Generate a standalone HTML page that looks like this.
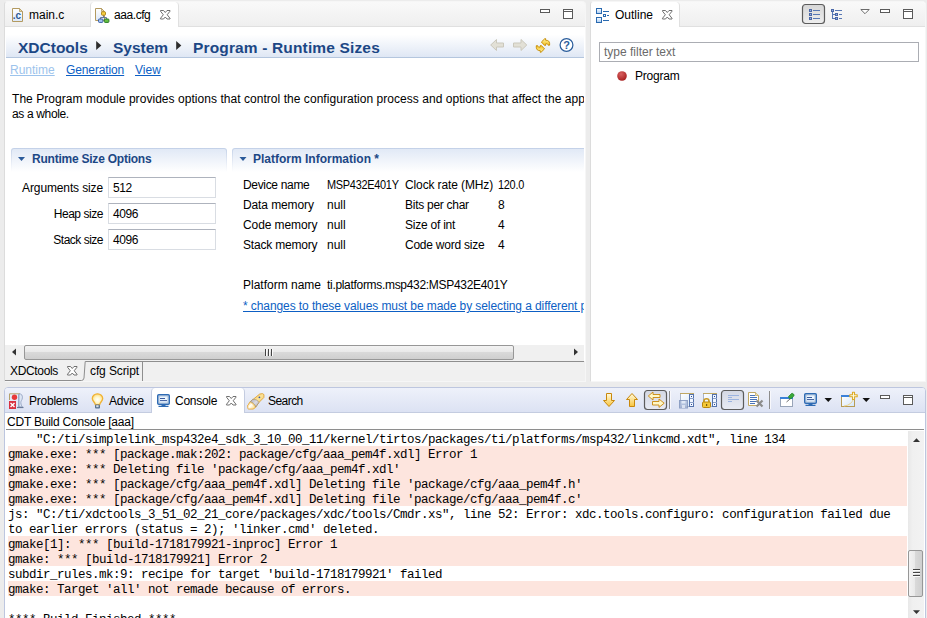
<!DOCTYPE html>
<html>
<head>
<meta charset="utf-8">
<title>aaa.cfg</title>
<style>
html,body{margin:0;padding:0;}
body{width:927px;height:618px;overflow:hidden;background:#ececec;position:relative;
 font-family:"Liberation Sans",sans-serif;font-size:12px;color:#000;}
.abs{position:absolute;}
.panel{position:absolute;background:#fff;border:1px solid #f6f6f6;border-left-color:#dcdcdc;box-sizing:border-box;}
.t{position:absolute;white-space:nowrap;line-height:14px;}
.l{color:#0d5fc4;text-decoration:underline;}
.hd{font-size:15.5px;font-weight:bold;color:#1c4785;line-height:18px;top:38.500px;}
.sec{font-weight:bold;color:#1c4785;}
.tf{position:absolute;box-sizing:border-box;border:1px solid #d9dde3;border-top-color:#aeb3bd;background:#fff;height:21px;width:108px;left:108px;}
.mono{font-family:"Liberation Mono",monospace;font-size:12.5px;letter-spacing:-0.5px;}
.cl{position:absolute;left:8px;width:899px;height:15px;line-height:19px;white-space:pre;}
.err{background:#fde5de;}
svg{position:absolute;overflow:visible;}
</style>
</head>
<body>

<!-- ================= EDITOR PANEL ================= -->
<div class="panel" style="left:4px;top:1px;width:582px;height:381px;border-radius:4px 4px 0 0;background:#f0f0f0;"></div>
<div class="abs" style="left:5px;top:2px;width:580px;height:24px;background:linear-gradient(#f9f9f9,#efefef);border-bottom:1px solid #e0e0e0;border-radius:3px 3px 0 0;"></div>
<div class="abs" style="left:5px;top:27px;width:580px;height:334px;background:#fff;"></div>
<div class="abs" id="edclip" style="left:0;top:0;width:584px;height:381px;overflow:hidden;">
  <!-- tab bar -->
  <div class="abs" style="left:90px;top:2px;width:87px;height:25px;background:#fff;border-left:1px solid #e0e0e0;border-right:1px solid #e0e0e0;border-radius:4px 4px 0 0;"></div>
  <div class="t" style="left:29px;top:8px;">main.c</div>
  <div class="t" style="left:114px;top:8px;letter-spacing:-0.43px;">aaa.cfg</div>
  <!-- white content -->
  <!-- header -->
  <div class="abs" style="left:6px;top:27px;width:578px;height:30px;background:linear-gradient(#ffffff 25%,#dfe7f4);border-bottom:1px solid #b4c6de;"></div>
  <div class="t hd" style="left:18px;">XDCtools</div>
  <div class="t hd" style="left:113px;">System</div>
  <div class="t hd" style="left:193px;letter-spacing:0.15px;">Program - Runtime Sizes</div>
  <!-- links -->
  <div class="t" style="left:10px;top:63px;color:#9cc3ec;text-decoration:underline;">Runtime</div>
  <div class="t l" style="left:66px;top:63px;letter-spacing:-0.12px;">Generation</div>
  <div class="t l" style="left:135px;top:63px;">View</div>
  <!-- description -->
  <div class="t" style="left:12px;top:92px;letter-spacing:0.045px;">The Program module provides options that control the configuration process and options that affect the application</div>
  <div class="t" style="left:12px;top:107px;letter-spacing:-0.35px;">as a whole.</div>

  <!-- section: Runtime Size Options -->
  <div class="abs" style="left:11px;top:148px;width:216px;height:24px;border-radius:3px 3px 0 0;background:linear-gradient(#c3d1e8,#ffffff);"></div>
  <div class="abs" style="left:12px;top:149px;width:214px;height:23px;border-radius:2px 2px 0 0;background:linear-gradient(#e1e9f6,#ffffff);"></div>
  <div class="t sec" style="left:32px;top:152px;letter-spacing:-0.23px;">Runtime Size Options</div>
  <div class="t" style="right:481px;top:181px;letter-spacing:-0.13px;">Arguments size</div>
  <div class="t" style="right:481px;top:207px;letter-spacing:-0.45px;">Heap size</div>
  <div class="t" style="right:481px;top:233px;letter-spacing:-0.5px;">Stack size</div>
  <div class="tf" style="top:177px;"></div>
  <div class="tf" style="top:203px;"></div>
  <div class="tf" style="top:229px;"></div>
  <div class="t" style="left:113px;top:181px;letter-spacing:-0.4px;">512</div>
  <div class="t" style="left:113px;top:207px;letter-spacing:-0.4px;">4096</div>
  <div class="t" style="left:113px;top:233px;letter-spacing:-0.4px;">4096</div>

  <!-- section: Platform Information -->
  <div class="abs" style="left:232px;top:148px;width:360px;height:24px;border-radius:3px 3px 0 0;background:linear-gradient(#c3d1e8,#ffffff);"></div>
  <div class="abs" style="left:233px;top:149px;width:358px;height:23px;border-radius:2px 2px 0 0;background:linear-gradient(#e1e9f6,#ffffff);"></div>
  <div class="t sec" style="left:253px;top:152px;">Platform Information *</div>
  <div class="t" style="left:243px;top:178px;letter-spacing:-0.33px;">Device name</div>
  <div class="t" style="left:243px;top:198px;letter-spacing:-0.11px;">Data memory</div>
  <div class="t" style="left:243px;top:218px;letter-spacing:-0.09px;">Code memory</div>
  <div class="t" style="left:243px;top:238px;letter-spacing:-0.2px;">Stack memory</div>
  <div class="t" style="left:327px;top:178px;letter-spacing:-0.3px;transform:scaleX(0.91);transform-origin:0 0;">MSP432E401Y</div>
  <div class="t" style="left:327px;top:198px;">null</div>
  <div class="t" style="left:327px;top:218px;">null</div>
  <div class="t" style="left:327px;top:238px;">null</div>
  <div class="t" style="left:405px;top:178px;letter-spacing:-0.12px;">Clock rate (MHz)</div>
  <div class="t" style="left:405px;top:198px;letter-spacing:-0.27px;">Bits per char</div>
  <div class="t" style="left:405px;top:218px;letter-spacing:-0.23px;">Size of int</div>
  <div class="t" style="left:405px;top:238px;letter-spacing:-0.24px;">Code word size</div>
  <div class="t" style="left:498px;top:178px;letter-spacing:-0.3px;transform:scaleX(0.91);transform-origin:0 0;">120.0</div>
  <div class="t" style="left:498px;top:198px;">8</div>
  <div class="t" style="left:498px;top:218px;">4</div>
  <div class="t" style="left:498px;top:238px;">4</div>
  <div class="t" style="left:243px;top:278px;">Platform name</div>
  <div class="t" style="left:327px;top:278px;letter-spacing:-0.31px;">ti.platforms.msp432:MSP432E401Y</div>
  <div class="t l" style="left:243px;top:299px;letter-spacing:-0.09px;">* changes to these values must be made by selecting a different platform</div>

  <!-- h scrollbar -->
  <div class="abs" style="left:5px;top:345px;width:579px;height:16px;background:#f0f0f0;"></div>
  <div class="abs" style="left:24px;top:345px;width:490px;height:15px;box-sizing:border-box;border:1px solid #979797;border-radius:2px;background:linear-gradient(#f3f3f3,#e9e9e9 45%,#d9d9d9 50%,#cfcfcf);"></div>

  <!-- bottom tabs -->
  <svg style="left:0;top:0;" width="584" height="382" viewBox="0 0 584 382"><path d="M5 380.500H81.500Q83.600 380.500 84 378L85.200 361.500H584M142.500 361.500V381" fill="none" stroke="#8e8e8e" stroke-width="1"/></svg>
  <div class="t" style="left:10px;top:364px;letter-spacing:-0.34px;">XDCtools</div>
  <div class="t" style="left:90px;top:364px;letter-spacing:-0.11px;">cfg Script</div>
</div>

<!-- ================= OUTLINE PANEL ================= -->
<div class="panel" style="left:590px;top:1px;width:336px;height:381px;border-radius:4px 4px 0 0;"></div>
<div class="abs" style="left:591px;top:2px;width:334px;height:24px;background:linear-gradient(#f9f9f9,#efefef);border-bottom:1px solid #e0e0e0;border-radius:3px 3px 0 0;"></div>
<div class="abs" style="left:591px;top:2px;width:88px;height:25px;background:#fff;border-right:1px solid #e0e0e0;border-radius:4px 4px 0 0;"></div>
<div class="t" style="left:615px;top:8px;">Outline</div>
<div class="abs" style="left:599px;top:42px;width:320px;height:20px;border:1px solid #abadb3;box-sizing:border-box;background:#fff;"></div>
<div class="t" style="left:604px;top:45px;color:#6a6a6a;">type filter text</div>
<div class="t" style="left:635px;top:69px;letter-spacing:-0.2px;">Program</div>

<!-- ================= CONSOLE PANEL ================= -->
<div class="panel" style="left:4px;top:387px;width:922px;height:240px;border-radius:4px 4px 0 0;border-color:#bdc6df;"></div>
<div class="abs" style="left:5px;top:388px;width:920px;height:24px;background:linear-gradient(#eef1fa,#dce2f3);border-bottom:1px solid #c4cce0;border-radius:3px 3px 0 0;"></div>
<div class="abs" style="left:151px;top:388px;width:92px;height:25px;background:#fff;border-left:1px solid #c4cce0;border-right:1px solid #c4cce0;border-radius:4px 4px 0 0;"></div>
<div class="t" style="left:29px;top:394px;letter-spacing:-0.24px;">Problems</div>
<div class="t" style="left:109px;top:394px;letter-spacing:-0.18px;">Advice</div>
<div class="t" style="left:175px;top:394px;letter-spacing:-0.27px;">Console</div>
<div class="t" style="left:268px;top:394px;letter-spacing:-0.55px;">Search</div>
<div class="t" style="left:7px;top:415px;letter-spacing:-0.22px;">CDT Build Console [aaa]</div>
<div class="abs" style="left:6px;top:429px;width:918px;height:1px;background:#8e8e8e;"></div>

<!-- console text -->
<div id="con" class="mono">
<div class="abs err" style="left:8px;top:446px;width:899px;height:60px;"></div>
<div class="abs err" style="left:8px;top:536px;width:899px;height:30px;"></div>
<div class="abs err" style="left:8px;top:581px;width:899px;height:15px;"></div>
<div class="cl" style="top:431px;">    "C:/ti/simplelink_msp432e4_sdk_3_10_00_11/kernel/tirtos/packages/ti/platforms/msp432/linkcmd.xdt", line 134</div>
<div class="cl" style="top:446px;">gmake.exe: *** [package.mak:202: package/cfg/aaa_pem4f.xdl] Error 1</div>
<div class="cl" style="top:461px;">gmake.exe: *** Deleting file 'package/cfg/aaa_pem4f.xdl'</div>
<div class="cl" style="top:476px;">gmake.exe: *** [package/cfg/aaa_pem4f.xdl] Deleting file 'package/cfg/aaa_pem4f.h'</div>
<div class="cl" style="top:491px;">gmake.exe: *** [package/cfg/aaa_pem4f.xdl] Deleting file 'package/cfg/aaa_pem4f.c'</div>
<div class="cl" style="top:506px;">js: "C:/ti/xdctools_3_51_02_21_core/packages/xdc/tools/Cmdr.xs", line 52: Error: xdc.tools.configuro: configuration failed due</div>
<div class="cl" style="top:521px;">to earlier errors (status = 2); 'linker.cmd' deleted.</div>
<div class="cl" style="top:536px;">gmake[1]: *** [build-1718179921-inproc] Error 1</div>
<div class="cl" style="top:551px;">gmake: *** [build-1718179921] Error 2</div>
<div class="cl" style="top:566px;">subdir_rules.mk:9: recipe for target 'build-1718179921' failed</div>
<div class="cl" style="top:581px;">gmake: Target 'all' not remade because of errors.</div>
<div class="cl" style="top:611px;">**** Build Finished ****</div>
</div>

<!-- v scrollbar -->
<div class="abs" style="left:908px;top:431px;width:16px;height:190px;background:linear-gradient(90deg,#e8e8e8,#f0f0f0 30%,#f2f2f2);"></div>
<div class="abs" style="left:908px;top:550px;width:15px;height:47px;box-sizing:border-box;border:1px solid #979797;border-radius:2px;background:linear-gradient(90deg,#f3f3f3,#e9e9e9 45%,#d9d9d9 50%,#cfcfcf);"></div>


<!-- ================= ICONS ================= -->
<!-- c file icon -->
<svg style="left:12px;top:8px;" width="12" height="14" viewBox="0 0 12 14">
  <defs><linearGradient id="gdoc" x1="0" y1="0" x2="0" y2="1"><stop offset="0" stop-color="#ffffff"/><stop offset="1" stop-color="#dce8f8"/></linearGradient></defs>
  <path d="M0.5 0.5H7.5L10.5 3.5V13.5H0.5Z" fill="url(#gdoc)" stroke="#b39a60"/>
  <path d="M7.5 0.5V3.5H10.5Z" fill="#e8d8a8" stroke="#b39a60" stroke-width="0.8"/>
  <text x="0.800" y="11" font-family="Liberation Sans, sans-serif" font-weight="bold" font-size="10" fill="#2c5a96">.c</text>
</svg>
<!-- cfg icon -->
<svg style="left:95px;top:8px;" width="15" height="15" viewBox="0 0 15 15">
  <path d="M0.5 0.5H6.5L9.5 3.5V12.5H0.5Z" fill="url(#gdoc)" stroke="#b39a60"/>
  <path d="M6.5 0.5V3.5H9.5Z" fill="#e8d8a8" stroke="#b39a60" stroke-width="0.8"/>
  <path d="M8.5 7V9.5M5.5 11.5V9.5H11.5V11.5" fill="none" stroke="#6a7a9a"/>
  <rect x="6.5" y="3.8" width="4" height="3.4" rx="0.8" fill="#f8d040" stroke="#b08820"/>
  <rect x="3.5" y="11" width="4.4" height="3.4" rx="0.8" fill="#a8c4f0" stroke="#3a60a8"/>
  <rect x="9.3" y="11" width="4.6" height="3.4" rx="0.8" fill="#68c040" stroke="#2a7a28"/>
</svg>
<!-- close X aaa.cfg -->
<svg style="left:160px;top:10px;" width="11" height="10" viewBox="0 0 11 10">
  <path id="xshape" d="M0.500 0.500H3.500L5.250 2.500L7 0.500H10V1.200L7.200 4.750L10 8.300V9H7L5.250 7L3.500 9H0.500V8.300L3.300 4.750L0.500 1.200Z" fill="#fff" stroke="#606060" stroke-width="0.9"/>
</svg>
<svg style="left:662px;top:10px;" width="11" height="10" viewBox="0 0 11 10"><use href="#xshape"/></svg>
<svg style="left:226px;top:396px;" width="11" height="10" viewBox="0 0 11 10"><use href="#xshape"/></svg>
<svg style="left:67px;top:366px;" width="11" height="10" viewBox="0 0 11 10"><use href="#xshape"/></svg>

<!-- min/max editor -->
<svg style="left:540px;top:9px;" width="34" height="10" viewBox="0 0 34 10" shape-rendering="crispEdges">
  <rect x="0.5" y="0.5" width="9" height="3" fill="#fff" stroke="#5a5a5a"/>
  <rect x="23.5" y="0.5" width="9" height="9" fill="#fff" stroke="#5a5a5a"/>
  <path d="M23.5 2.5H32.5" stroke="#5a5a5a"/>
</svg>
<!-- header triangles -->
<svg style="left:97px;top:41px;" width="90" height="10" viewBox="0 0 90 10">
  <path d="M-0.800 0L4.300 4.500L-0.800 9Z" fill="#2c2c2c"/>
  <path d="M79.200 0L84.300 4.500L79.200 9Z" fill="#2c2c2c"/>
</svg>
<!-- header toolbar -->
<svg style="left:490px;top:38px;" width="86" height="16" viewBox="0 0 86 16">
  <path d="M0.700 7L6.500 1.500V5H13.500V9H6.500V12.500Z" fill="#e2e0d6" stroke="#cbc8bc" stroke-width="1" stroke-linejoin="round"/>
  <path d="M36.800 7L31 1.500V5H23.500V9H31V12.500Z" fill="#e2e0d6" stroke="#cbc8bc" stroke-width="1" stroke-linejoin="round"/>
  <defs><linearGradient id="gref" x1="0" y1="0" x2="0" y2="1"><stop offset="0" stop-color="#fff2a0"/><stop offset="1" stop-color="#f4c020"/></linearGradient></defs>
  <g fill="url(#gref)" stroke="#c8900c" stroke-width="1" stroke-linejoin="round">
    <path id="ra" d="M51.400 4L54.900 0.600H55.600V2.200C58.400 2.200 59.600 3.600 59.600 5.500V7.200H58.200C58.200 6.200 57.300 5.700 55.800 5.700L55.500 7.400H54.600Z"/>
    <use href="#ra" transform="rotate(180 52.950 7.450)"/>
  </g>
  <circle cx="76.5" cy="7" r="6.4" fill="#fff" stroke="#2a5d9c" stroke-width="1.2"/>
  <text x="76.5" y="11" text-anchor="middle" font-family="Liberation Sans, sans-serif" font-weight="bold" font-size="11" fill="#2a5d9c">?</text>
</svg>

<!-- section twisties -->
<svg style="left:18px;top:157px;" width="230" height="5" viewBox="0 0 230 5">
  <path d="M0 0H7L3.5 4Z" fill="#2a5a9a"/>
  <path d="M221.500 0H228.500L225 4Z" fill="#2a5a9a"/>
</svg>

<!-- h scrollbar arrows + grip -->
<svg style="left:5px;top:345px;" width="579" height="15" viewBox="0 0 579 15">
  <path d="M11 3.5V10.500L7 7Z" fill="#333"/>
  <path d="M569 3.500V10.500L573 7Z" fill="#333"/>
  <g shape-rendering="crispEdges"><path d="M261.500 4V11M264.500 4V11M267.500 4V11" stroke="#fbfbfb"/><path d="M260.500 4V11M263.500 4V11M266.500 4V11" stroke="#444"/></g>
</svg>

<!-- outline icon -->
<svg style="left:596px;top:8px;" width="14" height="15" viewBox="0 0 14 15" shape-rendering="crispEdges">
  <defs><linearGradient id="gsq" x1="0" y1="0" x2="0" y2="1"><stop offset="0" stop-color="#ffffff"/><stop offset="1" stop-color="#a8ccf4"/></linearGradient></defs>
  <rect x="0.5" y="0.5" width="5" height="5" fill="url(#gsq)" stroke="#2a6ab0"/>
  <rect x="0.5" y="9.500" width="5" height="5" fill="url(#gsq)" stroke="#2a6ab0"/>
  <rect x="7.500" y="6.500" width="2" height="2" fill="#fff" stroke="#2a6ab0"/>
  <path d="M7 3.500H13M7 12.500H13M11 7.500H13" stroke="#2a6ab0"/>
</svg>
<!-- red ball Program -->
<svg style="left:617px;top:71px;" width="10" height="10" viewBox="0 0 10 10">
  <defs><radialGradient id="gred" cx="0.4" cy="0.3" r="0.7"><stop offset="0" stop-color="#d86060"/><stop offset="1" stop-color="#a82020"/></radialGradient></defs>
  <circle cx="5" cy="5" r="4.8" fill="url(#gred)"/>
</svg>
<!-- outline toolbar -->
<svg style="left:802px;top:4px;" width="112" height="20" viewBox="0 0 112 20">
  <defs><linearGradient id="gtg" x1="0" y1="0" x2="0" y2="1"><stop offset="0" stop-color="#d6d6d6"/><stop offset="1" stop-color="#eeeeee"/></linearGradient></defs>
  <rect x="0.5" y="0.5" width="22" height="19" rx="3" fill="url(#gtg)" stroke="#5c5c5c" stroke-width="1.2"/>
  <g shape-rendering="crispEdges">
    <rect x="7" y="5" width="3" height="3" fill="#4a68a8"/><rect x="7" y="9" width="3" height="3" fill="#4a68a8"/><rect x="7" y="13" width="3" height="3" fill="#4a68a8"/>
    <rect x="8" y="6" width="1" height="1" fill="#9ab0dc"/><rect x="8" y="10" width="1" height="1" fill="#9ab0dc"/><rect x="8" y="14" width="1" height="1" fill="#9ab0dc"/>
    <path d="M11 6.500H18M11 10.500H18M11 14.500H18" stroke="#5878b4"/>
    <rect x="29" y="5" width="3" height="3" fill="#4a68a8"/><rect x="33" y="9" width="3" height="3" fill="#4a68a8"/><rect x="33" y="13" width="3" height="3" fill="#4a68a8"/>
    <rect x="30" y="6" width="1" height="1" fill="#9ab0dc"/><rect x="34" y="10" width="1" height="1" fill="#9ab0dc"/><rect x="34" y="14" width="1" height="1" fill="#9ab0dc"/>
    <path d="M33 6.500H40M37 10.500H40M37 14.500H40M30.500 8V14.500H33M30.500 10.500H33" stroke="#5878b4" fill="none"/>
  </g>
  <path d="M58.800 5.500H67.200L63 9.700Z" fill="#fff" stroke="#5a5a5a" stroke-width="0.9"/>
  <g shape-rendering="crispEdges">
    <rect x="78.500" y="5.500" width="9" height="3" fill="#fff" stroke="#5a5a5a"/>
    <rect x="101.500" y="5.500" width="9" height="9" fill="#fff" stroke="#5a5a5a"/>
    <path d="M101.500 7.500H110.500" stroke="#5a5a5a"/>
  </g>
</svg>

<!-- ===== bottom tab icons ===== -->
<!-- problems -->
<svg style="left:8px;top:393px;" width="16" height="16" viewBox="0 0 16 16">
  <path d="M1.500 7V0.800H12" fill="none" stroke="#b5a26c" stroke-width="1"/>
  <path d="M10.500 1V14" stroke="#a8b8d6" stroke-width="1"/>
  <path d="M11 1H12.500C14.500 1.500 14.800 4.500 14 6.500C13.200 8 12.500 9 13 11C13.300 12.500 14 13.500 14.500 14H11Z" fill="#dde6f4" stroke="#8c9cbc" stroke-width="0.8"/>
  <path d="M9 14.500H15.500" stroke="#6a7a98" stroke-width="1.2"/>
  <circle cx="6.500" cy="4.300" r="2.700" fill="#e83838"/>
  <rect x="1" y="8" width="7" height="8" fill="#d83040"/>
  <path d="M2.500 10L6.500 14M6.500 10L2.500 14" stroke="#fff" stroke-width="1.400"/>
</svg>
<!-- advice bulb -->
<svg style="left:91px;top:393px;" width="13" height="16" viewBox="0 0 13 16">
  <defs><radialGradient id="gbulb" cx="0.5" cy="0.55" r="0.55"><stop offset="0" stop-color="#ffffff"/><stop offset="0.5" stop-color="#fff6c8"/><stop offset="1" stop-color="#fbd878"/></radialGradient></defs>
  <path d="M6.500 0.800C3.400 0.800 1.300 3 1.300 5.600C1.300 7.600 2.900 8.600 3.700 10L4.300 11.600H8.700L9.300 10C10.100 8.600 11.700 7.600 11.700 5.600C11.700 3 9.600 0.800 6.500 0.800Z" fill="url(#gbulb)" stroke="#f0b234" stroke-width="1.300"/>
  <rect x="4" y="11.400" width="5" height="4.200" rx="1" fill="#58728f"/>
  <rect x="5.200" y="12.200" width="2.400" height="2" fill="#d4dce6"/>
</svg>
<!-- console monitor (tab) -->
<svg style="left:157px;top:394px;" width="13" height="13" viewBox="0 0 13 13">
  <g id="mon">
  <rect x="0.750" y="0.750" width="11.500" height="9.500" rx="1" fill="#eaf5ff" stroke="#2e6bb4" stroke-width="1.500"/>
  <rect x="2" y="2" width="9" height="7" fill="none" stroke="#8aa0c0" stroke-width="0.600"/>
  <path d="M3 4.500H8M3 6.600H10" stroke="#3a5a9c" stroke-width="1"/>
  <path d="M4.500 10.500H8.500V11.800H11.500V13H1.500V11.800H4.500Z" fill="#2e6bb4"/>
  </g>
</svg>
<!-- search flashlight -->
<svg style="left:247px;top:393px;" width="18" height="17" viewBox="0 0 18 17">
  <defs>
    <linearGradient id="gfl" x1="0" y1="0" x2="1" y2="1"><stop offset="0" stop-color="#f4b840"/><stop offset="0.5" stop-color="#fbe298"/><stop offset="1" stop-color="#f0b43c"/></linearGradient>
    <linearGradient id="gfl2" x1="0" y1="0" x2="1" y2="1"><stop offset="0" stop-color="#f8c850"/><stop offset="0.45" stop-color="#ffffff"/><stop offset="1" stop-color="#f8d060"/></linearGradient>
    <linearGradient id="gfl3" x1="0" y1="0" x2="1" y2="1"><stop offset="0" stop-color="#a8a4ac"/><stop offset="0.5" stop-color="#dcdce4"/><stop offset="1" stop-color="#aaa4b0"/></linearGradient>
  </defs>
  <path d="M12.600 1.100L15.400 0.600L17 1.600L16.900 4.500L11.900 9.500L8.700 14.100L6.200 15.900H1.200L0.700 12.700L3.300 8.700Z" fill="url(#gfl)" stroke="#dc9c2c" stroke-width="0.800" stroke-linejoin="round"/>
  <path d="M3.300 8.700L0.700 12.700L1.200 15.900H6.200L8.700 14.100Z" fill="url(#gfl2)" stroke="#e8a838" stroke-width="0.600" stroke-linejoin="round"/>
  <path d="M3.300 8.700L5.700 6.300C8.400 6 11.400 7.600 11.900 9.500L8.700 14.100C8.600 11.600 5.600 9 3.300 8.700Z" fill="url(#gfl3)" stroke="#9c8c68" stroke-width="0.600" stroke-linejoin="round"/>
  <circle cx="12.400" cy="4.300" r="0.900" fill="#3456a8"/>
</svg>

<!-- ===== console toolbar ===== -->
<svg style="left:603px;top:390px;" width="312" height="20" viewBox="0 0 312 20">
  <defs>
    <linearGradient id="garr" x1="0" y1="0" x2="0" y2="1"><stop offset="0" stop-color="#fffbe0"/><stop offset="1" stop-color="#f8c43c"/></linearGradient>
    <linearGradient id="gtg2" x1="0" y1="0" x2="0" y2="1"><stop offset="0" stop-color="#d4d8e4"/><stop offset="1" stop-color="#e8ebf4"/></linearGradient>
    <linearGradient id="gwin" x1="0" y1="0" x2="1" y2="1"><stop offset="0" stop-color="#ffffff"/><stop offset="1" stop-color="#d4e6fa"/></linearGradient>
  </defs>
  <!-- down arrow -->
  <path d="M3.500 3.500H8.500V10.500H11.500L6 16.500L0.500 10.500H3.500Z" fill="url(#garr)" stroke="#c8880c" stroke-linejoin="round"/>
  <!-- up arrow -->
  <path d="M26.500 16.500H31.500V9.500H34.500L29 3.500L23.500 9.500H26.500Z" fill="url(#garr)" stroke="#c8880c" stroke-linejoin="round"/>
  <!-- toggle swap -->
  <rect x="41.500" y="0.500" width="22" height="19" rx="3" fill="url(#gtg2)" stroke="#5c5c5c" stroke-width="1.2"/>
  <path d="M45.300 6L50 2V4.500H57V7.500H50V10Z" fill="#fff8c8" stroke="#c8880c" stroke-width="0.900" stroke-linejoin="round"/>
  <path d="M61.200 13.200L56 9V11.500H49.500V15H56V17.400Z" fill="#fff8c8" stroke="#c8880c" stroke-width="0.900" stroke-linejoin="round"/>
  <path d="M66.500 1V19" stroke="#8c8c8c"/><path d="M67.500 1V19" stroke="#f8f8fc"/>
  <!-- scroll-lock w/ floppy -->
  <g shape-rendering="crispEdges">
    <rect x="77.500" y="3.500" width="13" height="13" fill="url(#gwin)" stroke="#a8b4c8"/>
    <path d="M77 3.500H91" stroke="#c0a864"/>
    <rect x="86.500" y="4.500" width="4" height="12" fill="#f2f7ff" stroke="#5573ac"/>
    <path d="M86.500 8.500H90.500M86.500 12.500H90.500" stroke="#8aa0c8"/>
    <rect x="88" y="6" width="1" height="1" fill="#2a4a98"/><rect x="88" y="14" width="1" height="1" fill="#2a4a98"/>
  </g>
  <rect x="76.500" y="10.500" width="8" height="7.500" fill="#a8b8d8" stroke="#8094bc" opacity="0.850"/>
  <rect x="78.500" y="11" width="4" height="2.500" fill="#e4ecf8" opacity="0.900"/>
  <rect x="79" y="15" width="3" height="3" fill="#dfe6f2" opacity="0.900"/>
  <!-- lock -->
  <g shape-rendering="crispEdges">
    <rect x="100.500" y="3.500" width="13" height="13" fill="url(#gwin)" stroke="#a8b4c8"/>
    <path d="M100 3.500H114" stroke="#c0a864"/>
    <rect x="109.500" y="4.500" width="4" height="12" fill="#f2f7ff" stroke="#5573ac"/>
    <path d="M109.500 8.500H113.500M109.500 12.500H113.500" stroke="#8aa0c8"/>
    <rect x="111" y="6" width="1" height="1" fill="#2a4a98"/><rect x="111" y="14" width="1" height="1" fill="#2a4a98"/>
  </g>
  <path d="M101 12.500V11C101 8 106 8 106 11V12.500" fill="none" stroke="#c89820" stroke-width="1.600"/>
  <rect x="99.500" y="12" width="8" height="5.500" rx="1" fill="#f4c838" stroke="#b8860c"/>
  <rect x="103" y="14" width="1.200" height="2" fill="#7a5a08"/>
  <!-- toggle wrap -->
  <rect x="118.500" y="0.500" width="22" height="19" rx="3" fill="url(#gtg2)" stroke="#5c5c5c" stroke-width="1.2"/>
  <g shape-rendering="crispEdges"><path d="M125 5.500H136M125 7.500H129M125 9.500H136M125 11.500H129" stroke="#9cb4e0"/></g>
  <!-- doc with x -->
  <path d="M145.500 2.500H152.500L155.500 5.500V15.500H145.500Z" fill="#fff" stroke="#c0a864"/>
  <path d="M152.500 2.500V5.500H155.500" fill="#f0e4b8" stroke="#c0a864" stroke-width="0.800"/>
  <g shape-rendering="crispEdges"><path d="M147 5.500H152M147 7.500H154M147 9.500H154M147 11.500H154M147 13.500H152" stroke="#4a74b8"/></g>
  <path d="M153.500 10.500L159.500 16.500M159.500 10.500L153.500 16.500" stroke="#8c8c8c" stroke-width="2.200"/>
  <path d="M166.500 1V19" stroke="#8c8c8c"/><path d="M167.500 1V19" stroke="#f8f8fc"/>
  <!-- pin console -->
  <g shape-rendering="crispEdges">
    <rect x="177.500" y="7.500" width="12" height="9" fill="#fff" stroke="#98a4b8"/>
    <rect x="177" y="7" width="13" height="2" fill="#3a80d8"/>
  </g>
  <path d="M183.500 12L187 9" stroke="#707070" stroke-width="1"/>
  <path d="M185.500 6.500L188.500 3.500C189.500 2.800 191.500 4.500 191 5.800L188 8.800C187 9 185.300 7.500 185.500 6.500Z" fill="#38a838" stroke="#1c7c24" stroke-width="0.700"/>
  <!-- monitor -->
  <g transform="translate(201,3)"><use href="#mon"/></g>
  <path d="M221.500 8H229L225.250 12Z" fill="#111"/>
  <!-- new console -->
  <g shape-rendering="crispEdges">
    <rect x="238.500" y="5.500" width="13" height="11" fill="url(#gwin)" stroke="#b89c54"/>
    <rect x="238" y="5" width="14" height="2" fill="#3a80d8"/>
  </g>
  <path d="M241 16C246 15.500 249 13 250.500 9" fill="none" stroke="#ecd48c" stroke-width="1"/>
  <path d="M249.500 2.200H251.500V4.800H254.200V6.800H251.500V9.500H249.500V6.800H246.800V4.800H249.500Z" fill="#fffbe0" stroke="#dcaa28" stroke-width="1.100" stroke-linejoin="round"/>
  <path d="M259.500 8H267L263.250 12Z" fill="#111"/>
  <!-- min / max -->
  <g shape-rendering="crispEdges">
    <rect x="277.500" y="5.500" width="9" height="3" fill="#fff" stroke="#5a5a5a"/>
    <rect x="300.500" y="5.500" width="9" height="9" fill="#fff" stroke="#5a5a5a"/>
    <path d="M300.500 7.500H309.500" stroke="#5a5a5a"/>
  </g>
</svg>

<!-- v scrollbar arrows + grip -->
<svg style="left:908px;top:430px;" width="16" height="188" viewBox="0 0 16 188">
  <path d="M5 12H12L8.500 8.200Z" fill="#333"/>
  <path d="M5 180.200H12L8.500 184Z" fill="#333"/>
  <g shape-rendering="crispEdges"><path d="M5 140.500H12M5 143.500H12M5 146.500H12" stroke="#fbfbfb"/><path d="M5 139.500H12M5 142.500H12M5 145.500H12" stroke="#444"/></g>
</svg>

</body>
</html>
